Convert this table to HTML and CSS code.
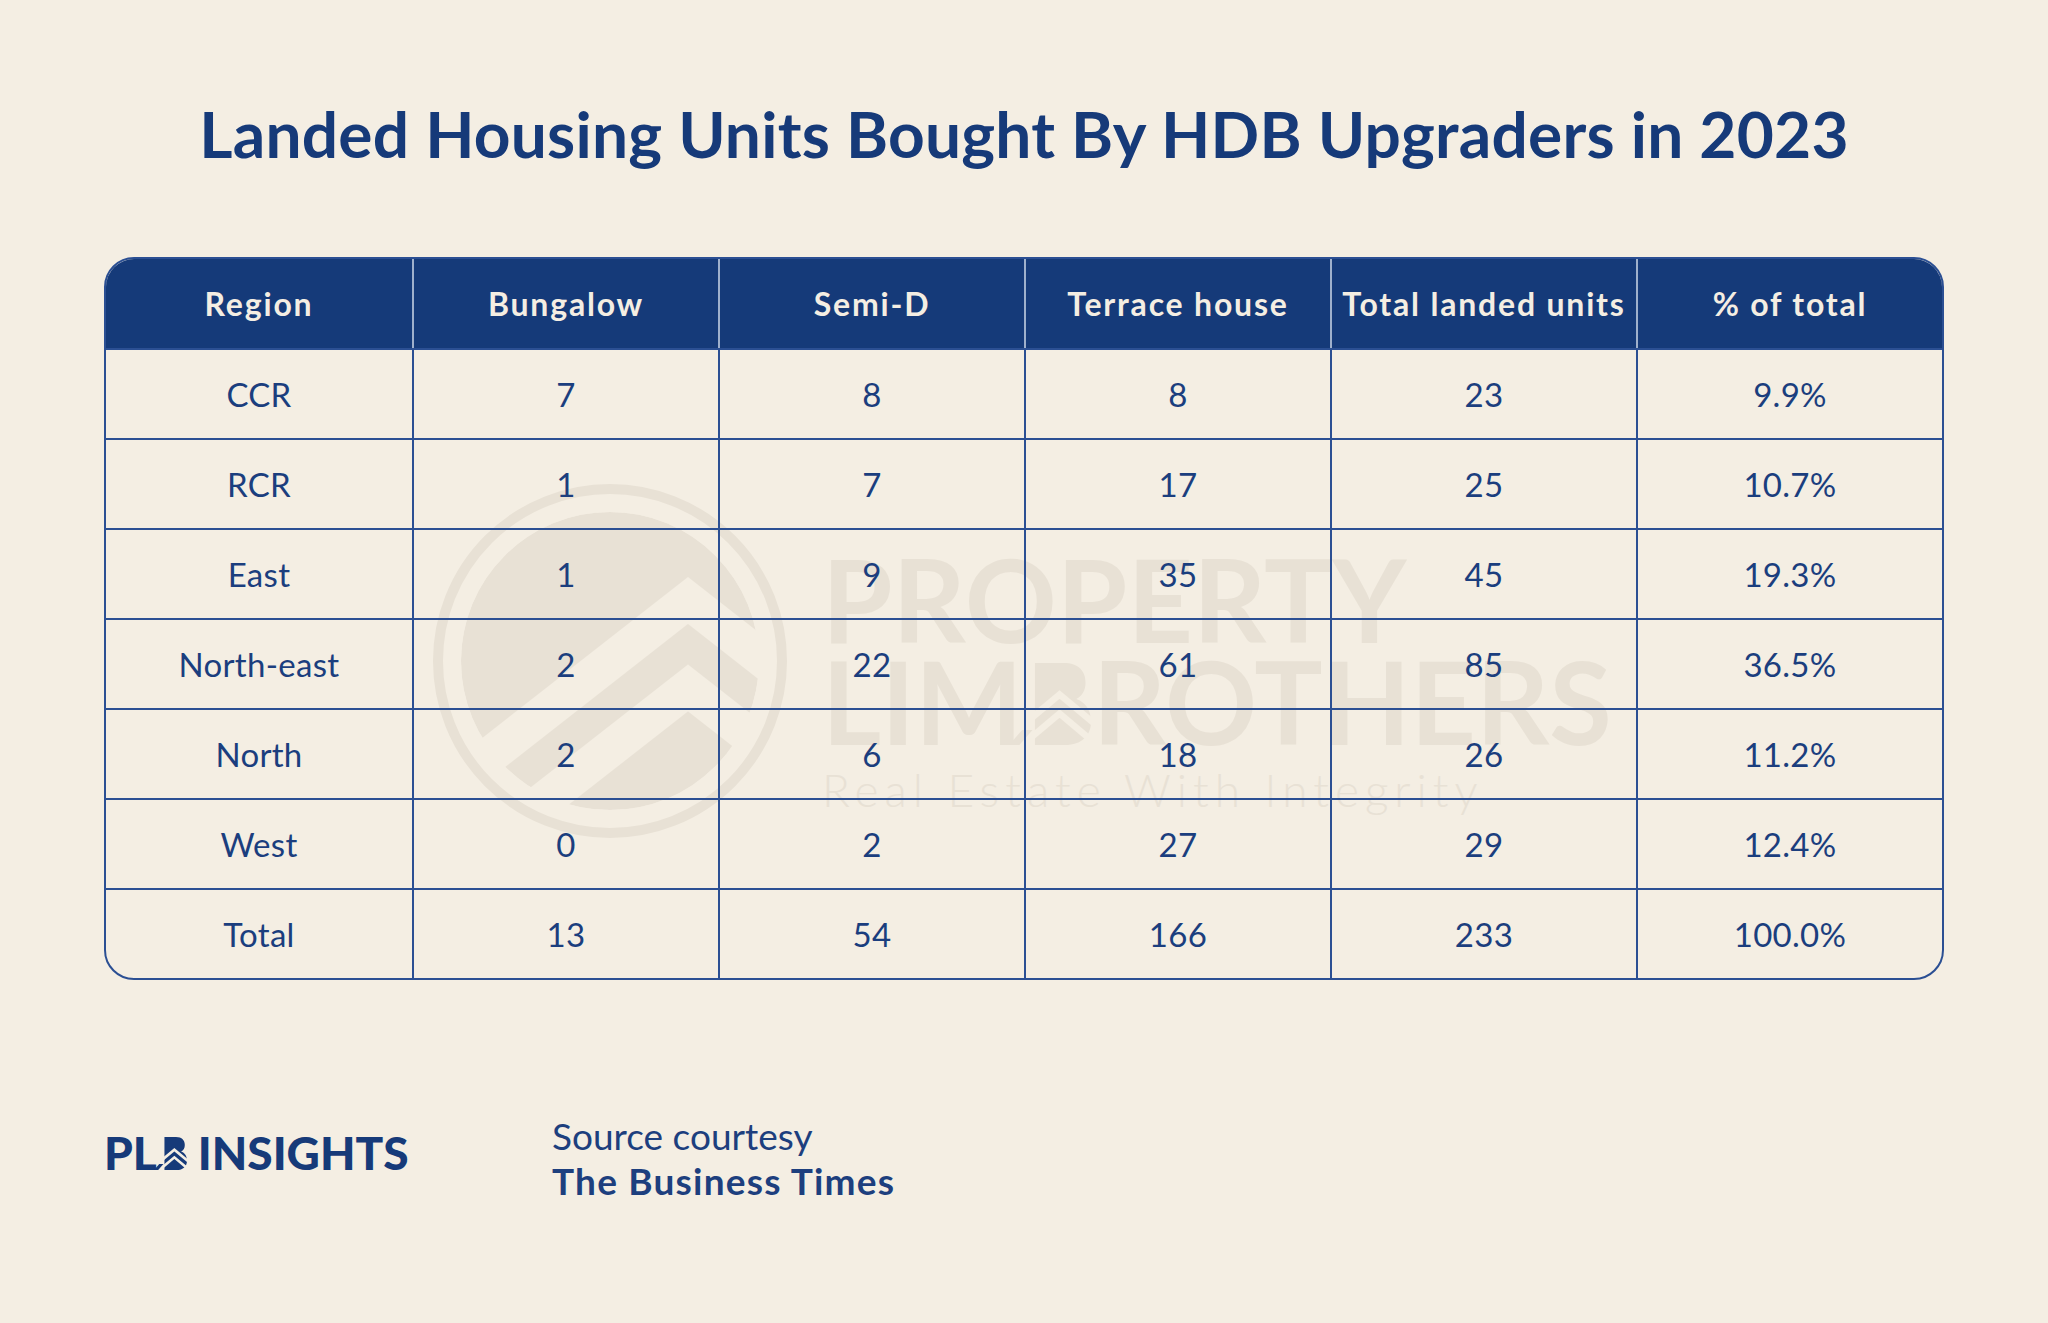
FILE: index.html
```html
<!DOCTYPE html>
<html lang="en">
<head>
<meta charset="utf-8">
<title>Landed Housing Units Bought By HDB Upgraders in 2023</title>
<link rel="stylesheet" href="styles.css">
</head>
<body>
<main class="page">
  <h1 class="title">Landed Housing Units Bought By HDB Upgraders in 2023</h1>

  <div class="table-wrap">
    <div class="watermark" aria-hidden="true">
      <svg class="wm-circle" viewBox="-178 -178 356 356">
        <defs>
          <mask id="chev">
            <circle cx="0" cy="0" r="149" fill="#fff"/>
            <polyline points="-237,186 78,-60.5 393,186" fill="none" stroke="#000" stroke-width="37"/>
            <polyline points="-237,273 78,27 393,273" fill="none" stroke="#000" stroke-width="37"/>
          </mask>
        </defs>
        <circle cx="0" cy="0" r="172" fill="none" stroke="currentColor" stroke-width="10"/>
        <circle cx="0" cy="0" r="149" fill="currentColor" mask="url(#chev)"/>
      </svg>
      <div class="wm-text">
        <div class="wm-line">PROPERTY</div>
        <div class="wm-line">LIM<svg class="wm-mark" viewBox="-7 0 30 30"><use href="#bmark"/></svg>ROTHERS</div>
        <div class="wm-tag">Real Estate With Integrity</div>
      </div>
    </div>

    <table class="data">
      <thead>
        <tr>
          <th>Region</th>
          <th>Bungalow</th>
          <th>Semi-D</th>
          <th>Terrace house</th>
          <th>Total landed units</th>
          <th>% of total</th>
        </tr>
      </thead>
      <tbody>
        <tr><td>CCR</td><td>7</td><td>8</td><td>8</td><td>23</td><td>9.9%</td></tr>
        <tr><td>RCR</td><td>1</td><td>7</td><td>17</td><td>25</td><td>10.7%</td></tr>
        <tr><td>East</td><td>1</td><td>9</td><td>35</td><td>45</td><td>19.3%</td></tr>
        <tr><td>North-east</td><td>2</td><td>22</td><td>61</td><td>85</td><td>36.5%</td></tr>
        <tr><td>North</td><td>2</td><td>6</td><td>18</td><td>26</td><td>11.2%</td></tr>
        <tr><td>West</td><td>0</td><td>2</td><td>27</td><td>29</td><td>12.4%</td></tr>
        <tr><td>Total</td><td>13</td><td>54</td><td>166</td><td>233</td><td>100.0%</td></tr>
      </tbody>
    </table>
  </div>

  <footer class="footer">
    <div class="brand">PL<svg class="mark" viewBox="-7 0 30 30">
        <defs>
          <g id="bmark">
            <mask id="bcut">
              <rect x="-8" y="-1" width="40" height="32" fill="#fff"/>
              <polyline points="-1,22 11.5,11.5 24,22" fill="none" stroke="#000" stroke-width="2.4"/>
              <polyline points="-1,29 11.5,18.5 24,29" fill="none" stroke="#000" stroke-width="2.4"/>
            </mask>
            <path d="M2.5 0 H13 C18.5 0 21 3 21 7.2 C21 10 19.8 12 17.6 13.2 C20.9 14.3 23 17.2 23 21.5 C23 26.6 19.6 30 13.5 30 H2.5 Z" fill="currentColor" mask="url(#bcut)"/>
            <polygon points="-7,30 -3.2,30 1.6,24.5 -2.2,24.5" fill="currentColor"/>
          </g>
        </defs>
        <use href="#bmark"/>
      </svg> INSIGHTS</div>
    <div class="source">
      <div class="src-label">Source courtesy</div>
      <div class="src-name">The Business Times</div>
    </div>
  </footer>
</main>
</body>
</html>
```

FILE: styles.css
```css
html, body {
  margin: 0;
  padding: 0;
}

body {
  background: #f4eee3;
  font-family: Lato, "Noto Sans", "Liberation Sans", sans-serif;
  color: #1b3e7e;
}

.page {
  width: 2048px;
  height: 1323px;
  box-sizing: border-box;
  padding: 95px 104px 0;
  overflow: hidden;
}

.title {
  margin: 0;
  text-align: center;
  font-size: 64px;
  line-height: 77px;
  font-weight: 700;
  letter-spacing: 0.25px;
  color: #163a79;
}

.table-wrap {
  position: relative;
  margin-top: 85px;
  border: 2px solid #2b4f93;
  border-radius: 30px;
  overflow: hidden;
}

.watermark {
  position: absolute;
  inset: 0;
  z-index: 0;
  pointer-events: none;
  color: #e8e1d5;
}

.wm-circle {
  position: absolute;
  left: 326px;
  top: 224px;
  width: 356px;
  height: 356px;
}

.wm-text {
  position: absolute;
  left: 716px;
  top: 289px;
  white-space: nowrap;
}

.wm-line {
  font-size: 114px;
  font-weight: 700;
  line-height: 102px;
}

.wm-mark {
  height: 82px;
  width: 82px;
  vertical-align: baseline;
  margin: 0 2px 0 -14px;
}

.wm-tag {
  margin-top: 15px;
  font-size: 46px;
  font-weight: 300;
  line-height: 46px;
  letter-spacing: 6px;
}

.data {
  position: relative;
  z-index: 1;
  width: 100%;
  border-collapse: separate;
  border-spacing: 0;
  table-layout: fixed;
}

.data th {
  box-sizing: border-box;
  height: 89px;
  padding: 0;
  background: #153a79;
  color: #f4eee3;
  font-size: 32px;
  font-weight: 700;
  letter-spacing: 1.8px;
  text-align: center;
  border-left: 2px solid #9fb0cc;
}

.data td {
  box-sizing: border-box;
  height: 90px;
  padding: 0;
  font-size: 33px;
  font-weight: 400;
  letter-spacing: 0.3px;
  text-align: center;
  border-top: 2px solid #2b4f93;
  border-left: 2px solid #2b4f93;
  color: #1b3e7e;
}

.data th:first-child,
.data td:first-child {
  border-left: none;
}

.footer {
  display: grid;
  grid-template-columns: 448px auto;
  align-items: start;
  margin-top: 133px;
}

.brand {
  padding-top: 12px;
  font-size: 46px;
  font-weight: 900;
  line-height: 55px;
  color: #163a79;
  white-space: nowrap;
}

.mark {
  width: 33px;
  height: 33px;
  vertical-align: baseline;
  margin-left: -3px;
}

.source {
  font-size: 37px;
  line-height: 45px;
  color: #1d3f7e;
}

.src-label {
  font-weight: 400;
}

.src-name {
  font-weight: 700;
  letter-spacing: 1.2px;
}
```
